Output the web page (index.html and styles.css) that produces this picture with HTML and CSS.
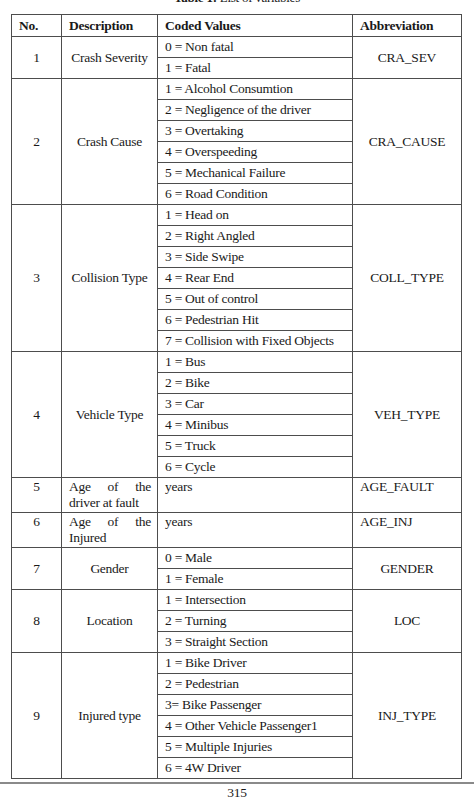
FILE: index.html
```html
<!DOCTYPE html>
<html>
<head>
<meta charset="utf-8">
<link rel="stylesheet" href="styles.css">
</head>
<body>
<div class="page">
  <div class="caption"><b>Table 1:</b> List of variables</div>
  <table class="vars">
    <colgroup>
      <col class="c-no"><col class="c-desc"><col class="c-val"><col class="c-abbr">
    </colgroup>
    <thead>
      <tr class="head"><th>No.</th><th>Description</th><th>Coded Values</th><th>Abbreviation</th></tr>
    </thead>
    <tbody>
      <tr><td class="num" rowspan="2">1</td><td class="desc" rowspan="2">Crash Severity</td><td class="val">0 = Non fatal</td><td class="abbr" rowspan="2">CRA_SEV</td></tr>
      <tr><td class="val">1 = Fatal</td></tr>

      <tr><td class="num" rowspan="6">2</td><td class="desc" rowspan="6">Crash Cause</td><td class="val">1 = Alcohol Consumtion</td><td class="abbr" rowspan="6">CRA_CAUSE</td></tr>
      <tr><td class="val">2 = Negligence of the driver</td></tr>
      <tr><td class="val">3 = Overtaking</td></tr>
      <tr><td class="val">4 = Overspeeding</td></tr>
      <tr><td class="val">5 = Mechanical Failure</td></tr>
      <tr><td class="val">6 = Road Condition</td></tr>

      <tr><td class="num" rowspan="7">3</td><td class="desc" rowspan="7">Collision Type</td><td class="val">1 = Head on</td><td class="abbr" rowspan="7">COLL_TYPE</td></tr>
      <tr><td class="val">2 = Right Angled</td></tr>
      <tr><td class="val">3 = Side Swipe</td></tr>
      <tr><td class="val">4 = Rear End</td></tr>
      <tr><td class="val">5 = Out of control</td></tr>
      <tr><td class="val">6 = Pedestrian Hit</td></tr>
      <tr><td class="val">7 = Collision with Fixed Objects</td></tr>

      <tr><td class="num" rowspan="6">4</td><td class="desc" rowspan="6">Vehicle Type</td><td class="val">1 = Bus</td><td class="abbr" rowspan="6">VEH_TYPE</td></tr>
      <tr><td class="val">2 = Bike</td></tr>
      <tr><td class="val">3 = Car</td></tr>
      <tr><td class="val">4 = Minibus</td></tr>
      <tr><td class="val">5 = Truck</td></tr>
      <tr><td class="val">6 = Cycle</td></tr>

      <tr class="tall"><td class="num top">5</td><td class="desc just">Age of the driver at fault</td><td class="val top">years</td><td class="abbr left">AGE_FAULT</td></tr>
      <tr class="tall"><td class="num top">6</td><td class="desc just">Age of the Injured</td><td class="val top">years</td><td class="abbr left">AGE_INJ</td></tr>

      <tr><td class="num" rowspan="2">7</td><td class="desc" rowspan="2">Gender</td><td class="val">0 = Male</td><td class="abbr" rowspan="2">GENDER</td></tr>
      <tr><td class="val">1 = Female</td></tr>

      <tr><td class="num" rowspan="3">8</td><td class="desc" rowspan="3">Location</td><td class="val">1 = Intersection</td><td class="abbr" rowspan="3">LOC</td></tr>
      <tr><td class="val">2 = Turning</td></tr>
      <tr><td class="val">3 = Straight Section</td></tr>

      <tr><td class="num" rowspan="6">9</td><td class="desc" rowspan="6">Injured type</td><td class="val">1 = Bike Driver</td><td class="abbr" rowspan="6">INJ_TYPE</td></tr>
      <tr><td class="val">2 = Pedestrian</td></tr>
      <tr><td class="val">3= Bike Passenger</td></tr>
      <tr><td class="val">4 = Other Vehicle Passenger1</td></tr>
      <tr><td class="val">5 = Multiple Injuries</td></tr>
      <tr><td class="val">6 = 4W Driver</td></tr>
    </tbody>
  </table>
  <div class="footer">
    <div class="rule"></div>
    <div class="pageno">315</div>
  </div>
</div>
</body>
</html>
```
FILE: styles.css
```css
html, body {
  margin: 0;
  padding: 0;
  background: #ffffff;
}
body {
  font-family: "Liberation Serif", "Times New Roman", serif;
  color: #1a1a1a;
  font-size: 13.5px;
  letter-spacing: -0.25px;
  overflow: hidden;
}
.page {
  width: 474px;
  height: 797px;
  overflow: hidden;
}
.caption {
  text-align: center;
  font-size: 13px;
  line-height: 14px;
  margin-top: -9px;
  height: 14px;
}
.vars {
  border-collapse: collapse;
  margin: 9px 0 0 11px;
  width: 450px;
  table-layout: fixed;
}
.c-no { width: 50px; }
.c-desc { width: 96px; }
.c-val { width: 195px; }
.c-abbr { width: 109px; }
.vars th, .vars td {
  border: 1px solid #4d4d4d;
  padding: 0 7px;
  line-height: 20px;
  height: 20px;
  vertical-align: middle;
  white-space: nowrap;
}
.vars th {
  text-align: left;
  font-weight: bold;
  height: 21px;
}
.vars td.val {
  padding-left: 7px;
}
.vars td.num {
  text-align: center;
}
.vars td.desc {
  text-align: center;
}
.vars td.abbr {
  text-align: center;
}
.vars tr.tall td {
  vertical-align: top;
  height: 33px;
  line-height: 16px;
  padding-top: 1px;
}
.vars td.desc.just {
  white-space: normal;
  text-align: justify;
  text-align-last: left;
  padding: 1px 6px 0 7px;
}
.vars td.abbr.left {
  text-align: left;
}
.footer {
  margin-top: 3px;
}
.rule {
  height: 2px;
  background: #8a8a8a;
  width: 474px;
}
.pageno {
  text-align: center;
  font-size: 13.5px;
  line-height: 14px;
  margin-top: 2px;
}
```
